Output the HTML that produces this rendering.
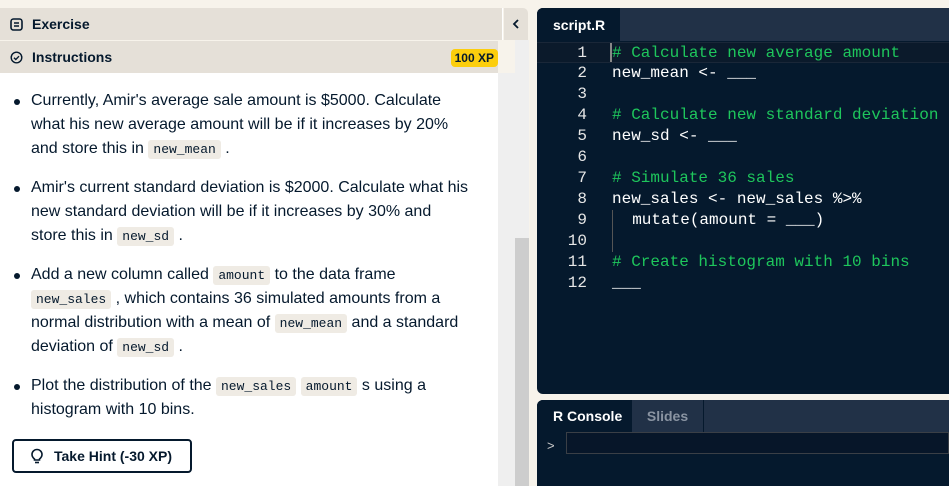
<!DOCTYPE html>
<html><head><meta charset="utf-8"><style>
*{box-sizing:border-box;margin:0;padding:0}
body{width:949px;height:486px;overflow:hidden;background:#f7f3eb;font-family:"Liberation Sans",sans-serif;position:relative}
.hdr{position:absolute;left:0;background:#e5e0d8;color:#05192d;font-weight:bold;font-size:14px;display:flex;align-items:center;padding-left:10px}
.hdr svg{margin-right:9px}
.left{position:absolute;left:0;top:73px;width:498px;height:413px;background:#fff}
.sb{position:absolute;left:498px;top:73px;width:17px;height:413px;background:#efefef}
.thumb{position:absolute;left:515px;top:238px;width:14px;height:248px;background:#cdcdcd}
ul{list-style:none;position:absolute;left:0;top:89px;width:498px}
li{position:relative;padding-left:31px;font-size:16px;line-height:24px;color:#05192d;margin-bottom:15px;white-space:nowrap;overflow:hidden}
li:before{content:"";position:absolute;left:14px;top:10px;width:6px;height:6px;border-radius:50%;background:#05192d}
code{font-family:"Liberation Mono",monospace;font-size:13px;line-height:16px;background:#efebe4;padding:2px 5px;border-radius:3px;color:#05192d}
.btn{position:absolute;left:12px;top:439px;width:180px;height:34px;border:2px solid #05192d;border-radius:4px;font-weight:bold;font-size:14px;color:#05192d;display:flex;align-items:center;padding-left:16px}
.ed{position:absolute;left:537px;top:8px;width:412px;height:386px;background:#05192d;border-radius:6px 0 0 6px;overflow:hidden}
.tabs{height:33px;background:#213147;display:flex}
.tab{background:#05192d;color:#fff;font-weight:bold;font-size:14px;width:83px;display:flex;align-items:center;padding-left:16px}
.code{position:absolute;top:34px;left:0;right:0;font-family:"Liberation Mono",monospace;font-size:16px;line-height:21px;color:#fff}
.ln{display:flex;height:21px;white-space:pre}
.ln .n{width:50px;text-align:right;color:#e6e6e6}
.ln .t{padding-left:25px}
.c{color:#1ec65c}
.con{position:absolute;left:537px;top:400px;width:412px;height:86px;background:#05192d;border-radius:6px 0 0 0;overflow:hidden}
</style></head><body>
<div class="hdr" style="top:8px;width:503px;height:32px;border-right:1px solid #fff"><svg width="13" height="13" viewBox="0 0 13 13"><rect x="1" y="1" width="11" height="11" rx="2.5" fill="none" stroke="#05192d" stroke-width="1.6"/><path d="M4 5h5M4 8h5" stroke="#05192d" stroke-width="1.5"/></svg>Exercise</div>
<div style="position:absolute;left:504px;top:8px;width:24px;height:32px;background:#e5e0d8;border-radius:0 5px 0 0;display:flex;align-items:center;justify-content:center"><svg width="8" height="10" viewBox="0 0 8 10"><path d="M6 1L2 5l4 4" fill="none" stroke="#05192d" stroke-width="1.8"/></svg></div>
<div class="hdr" style="top:41px;width:498px;height:32px"><svg width="13" height="13" viewBox="0 0 13 13"><circle cx="6.5" cy="6.5" r="5.3" fill="none" stroke="#05192d" stroke-width="1.4"/><path d="M4 6.7l1.8 1.8L9 5.2" fill="none" stroke="#05192d" stroke-width="1.4"/></svg>Instructions<span style="position:absolute;right:0;top:8px;background:#fcce0d;border-radius:4px;font-size:12px;padding:2px 4px">100 XP</span></div>
<div class="left"></div>
<div class="sb"></div><div class="thumb"></div>
<div style="position:absolute;left:515px;top:40px;width:14px;height:198px;background:#efefef"></div>
<ul>
<li>Currently, Amir's average sale amount is $5000. Calculate<br>what his new average amount will be if it increases by 20%<br>and store this in <code>new_mean</code> .</li>
<li>Amir's current standard deviation is $2000. Calculate what his<br>new standard deviation will be if it increases by 30% and<br>store this in <code>new_sd</code> .</li>
<li>Add a new column called <code>amount</code> to the data frame<br><code>new_sales</code> , which contains 36 simulated amounts from a<br>normal distribution with a mean of <code>new_mean</code> and a standard<br>deviation of <code>new_sd</code> .</li>
<li>Plot the distribution of the <code>new_sales</code> <code>amount</code> s using a<br>histogram with 10 bins.</li>
</ul>
<div class="btn"><svg width="14" height="16" viewBox="0 0 14 16" style="margin-right:10px"><path d="M4.5 11C3 9.8 2 8.3 2 6.5a5 5 0 0110 0c0 1.8-1 3.3-2.5 4.5V12h-5z" fill="none" stroke="#05192d" stroke-width="1.6"/><path d="M5 14.5h4" stroke="#05192d" stroke-width="1.6"/></svg>Take Hint (-30 XP)</div>
<div class="ed"><div class="tabs"><div class="tab">script.R</div></div>
<div class="code">
<div class="ln" style="background:#0b1a2b;border-top:1px solid #1a2738;border-bottom:1px solid #1a2738;height:21px"><span class="n">1</span><span class="t c" style="border-left:2px solid #888;margin-left:23px;padding-left:0"># Calculate new average amount</span></div>
<div class="ln"><span class="n">2</span><span class="t">new_mean &lt;- ___</span></div>
<div class="ln"><span class="n">3</span><span class="t"></span></div>
<div class="ln"><span class="n">4</span><span class="t c"># Calculate new standard deviation</span></div>
<div class="ln"><span class="n">5</span><span class="t">new_sd &lt;- ___</span></div>
<div class="ln"><span class="n">6</span><span class="t"></span></div>
<div class="ln"><span class="n">7</span><span class="t c"># Simulate 36 sales</span></div>
<div class="ln"><span class="n">8</span><span class="t">new_sales &lt;- new_sales %&gt;%</span></div>
<div class="ln"><span class="n">9</span><span class="t" style="padding-left:0;margin-left:25px;border-left:1px solid #555">  mutate(amount = ___)</span></div>
<div class="ln"><span class="n">10</span><span class="t" style="padding-left:0;margin-left:25px;border-left:1px solid #555"></span></div>
<div class="ln"><span class="n">11</span><span class="t c"># Create histogram with 10 bins</span></div>
<div class="ln"><span class="n">12</span><span class="t">___</span></div>
</div></div>
<div class="con"><div class="tabs" style="height:32px"><div class="tab" style="width:95px">R Console</div><div style="width:72px;color:#8a94a2;font-weight:bold;font-size:14px;display:flex;align-items:center;justify-content:center;border-right:1px solid #05192d">Slides</div></div>
<div style="position:absolute;left:10px;top:38px;color:#ccc;font-size:13px">&gt;</div>
<div style="position:absolute;left:29px;top:32px;right:0;height:22px;border:1px solid #3a3f46;background:#071629"></div></div>
</body></html>
